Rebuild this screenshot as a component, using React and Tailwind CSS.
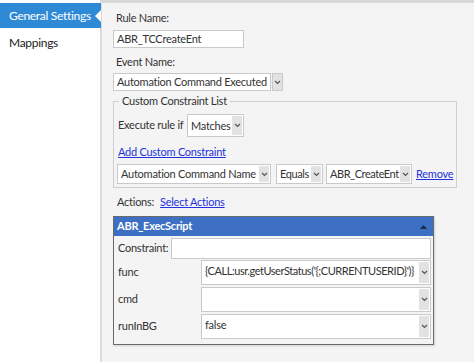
import React from "react";

const Chevron = () => (
  <svg width="7" height="5" viewBox="0 0 7 5" fill="none">
    <path d="M1 1 L3.5 3.5 L6 1" stroke="#555" strokeWidth="1.2" />
  </svg>
);

const Select = ({ className, textClass, children }) => (
  <div className={"flex items-stretch border border-[#c9c9c9] bg-white " + className}>
    <div className={"flex-1 overflow-hidden whitespace-nowrap pl-[3px] pr-[2px] text-[#333] " + textClass}>{children}</div>
    <div className="my-[1px] mr-[1px] w-[10px] shrink-0 bg-[#e2e2e2] flex items-center justify-center">
      <Chevron />
    </div>
  </div>
);

const Sidebar = () => (
  <div className="w-[100px] shrink-0 bg-white pt-[3px] whitespace-nowrap tracking-[-0.3px]">
    <div className="relative h-[25px] w-[101px] bg-[#2f8ad6] pl-[9px] flex items-center text-[12px] text-white">
      General Settings
      <div className="absolute right-0 top-[7px] w-0 h-0 border-y-[6px] border-y-transparent border-r-[6px] border-r-white" />
    </div>
    <div className="h-[30px] pl-[9px] flex items-center text-[12px] text-[#222]">Mappings</div>
  </div>
);

const ActionRow = ({ label, children, h }) => (
  <div className={"flex items-center " + h}>
    <div className="w-[87px] pl-[4px] text-[#333]">{label}</div>
    {children}
  </div>
);

export default function App() {
  return (
    <div className="w-[474px] h-[364px] flex bg-white font-['Lato',sans-serif] text-[11px] tracking-[-0.25px] whitespace-nowrap">
      <Sidebar />
      <div className="h-[362px] flex-1 bg-[#f4f4f4] border-l-2 border-l-[#dcdcdc] border-t-[3px] border-t-[#d8d8d8] pl-[11px] pr-[18px] pt-[7px]">
        <div className="pl-[3px] leading-[16px] text-[#333]">Rule Name:</div>
        <div className="mt-[4px] w-[131px] h-[18px] border border-[#c9c9c9] bg-white px-[3px] leading-[16px] text-[#333]">
          ABR_TCCreateEnt
        </div>
        <div className="mt-[6px] pl-[3px] leading-[16px] text-[#333]">Event Name:</div>
        <div className="mt-[3px] flex h-[18px] w-[170px]">
          <div className="flex-1 border border-[#c9c9c9] bg-white px-[3px] leading-[16px] text-[#333]">
            Automation Command Executed
          </div>
          <div className="ml-[1px] w-[14px] border border-[#c9c9c9] bg-[#e2e2e2] flex items-center justify-center">
            <Chevron />
          </div>
        </div>

        <fieldset className="mt-[2px] w-[341px] h-[95px] border border-[#cfcfcf] px-[3px] pt-[5px]">
          <legend className="ml-[2px] px-[3px] text-[#333] leading-[16px]">Custom Constraint List</legend>
          <div className="flex items-center">
            <span className="text-[#333] w-[70px] pl-[1px]">Execute rule if</span>
            <Select className="w-[57px] h-[23px]" textClass="leading-[21px]">Matches</Select>
          </div>
          <div className="mt-[7px] pl-[1px] leading-[16px] text-[#2233dd] underline">Add Custom Constraint</div>
          <div className="mt-[4px] flex items-center h-[20px]">
            <Select className="w-[154px] h-[20px]" textClass="leading-[18px]">Automation Command Name</Select>
            <Select className="ml-[5px] w-[47px] h-[20px]" textClass="leading-[18px] tracking-[-0.4px]">Equals</Select>
            <Select className="ml-[3px] w-[86px] h-[20px]" textClass="leading-[18px] tracking-[-0.45px]">ABR_CreateEnt</Select>
            <span className="ml-[4px] text-[#2233dd] underline">Remove</span>
          </div>
        </fieldset>

        <div className="mt-[6px] flex items-center leading-[16px] pl-[4px]">
          <span className="text-[#333]">Actions:</span>
          <span className="ml-[6px] text-[#2233dd] underline">Select Actions</span>
        </div>

        <div className="mt-[6px] w-[321px] h-[129px] border border-[#6a6a6a] bg-[#f4f4f4] shadow-[1px_1px_2px_rgba(0,0,0,0.15)]">
          <div className="h-[19px] bg-[#3d6fc4] flex items-center justify-between pl-[3px] pr-[6px] text-white font-bold">
            <span>ABR_ExecScript</span>
            <svg width="7" height="4" viewBox="0 0 7 4">
              <path d="M0 4 L3.5 0 L7 4 Z" fill="#1c2a44" />
            </svg>
          </div>
          <div className="flex items-center h-[22px] mt-[1px]">
            <div className="w-[57px] pl-[4px] text-[#333]">Constraint:</div>
            <div className="w-[260px] h-[21px] border border-[#c9c9c9] bg-white" />
          </div>
          <ActionRow label="func" h="h-[27px]">
            <Select className="w-[230px] h-[25px]" textClass="leading-[18px] pt-[1px] tracking-[-0.45px]">
              {"{CALL:usr.getUserStatus('{;CURRENTUSERID}')}"}
            </Select>
          </ActionRow>
          <ActionRow label="cmd" h="h-[27px]">
            <Select className="w-[230px] h-[25px]" textClass="" />
          </ActionRow>
          <ActionRow label="runInBG" h="h-[27px]">
            <Select className="w-[230px] h-[25px]" textClass="leading-[18px] pt-[1px]">false</Select>
          </ActionRow>
        </div>
      </div>
    </div>
  );
}
